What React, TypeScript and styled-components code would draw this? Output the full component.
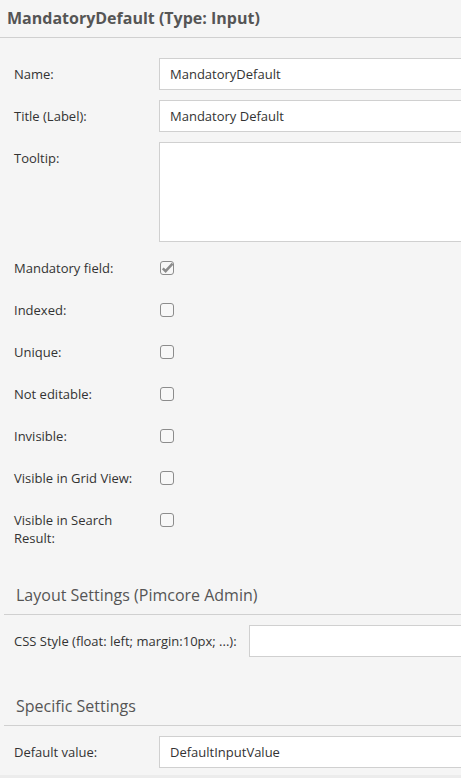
import React from "react";
import styled, { createGlobalStyle } from "styled-components";

const GlobalStyle = createGlobalStyle`
    html, body {
        margin: 0;
        padding: 0;
        background: #ececec;
    }
    body {
        font-family: "Open Sans", "Liberation Sans", sans-serif;
        overflow: hidden;
    }
`

const Panel = styled.div`
    width: 461px;
    height: 775px;
    background: #f5f5f5;
    overflow: hidden;
`

const Header = styled.div`
    height: 37px;
    line-height: 37px;
    padding-left: 7px;
    border-bottom: 1px solid #d0d0d0;
    font-size: 16px;
    font-weight: 700;
    color: #555;
    white-space: nowrap;
`

const Body = styled.div`
    padding-top: 20px;
    display: flex;
    flex-direction: column;
`

const Row = styled.div<{ $labelWidth?: number }>`
    display: flex;
    align-items: flex-start;
    min-height: 32px;
    margin-bottom: 10px;
    padding-left: 14px;

    & > label {
        flex: 0 0 ${({ $labelWidth }) => $labelWidth ?? 145}px;
    }
`

const Label = styled.label`
    box-sizing: border-box;
    padding: 7px 10px 0 0;
    font-size: 13px;
    line-height: 18px;
    color: #333;
`

const TextInput = styled.input`
    flex: 1 0 auto;
    width: 340px;
    height: 32px;
    box-sizing: border-box;
    margin: 0;
    padding: 0 10px;
    border: 1px solid #d0d0d0;
    border-right: none;
    background: #fff;
    font-family: inherit;
    font-size: 13px;
    color: #333;
    outline: none;
`

const TextArea = styled.textarea`
    flex: 1 0 auto;
    width: 340px;
    height: 100px;
    box-sizing: border-box;
    margin: 0;
    padding: 6px 10px;
    border: 1px solid #d0d0d0;
    border-right: none;
    background: #fff;
    resize: none;
    outline: none;
`

const CheckWrap = styled.span`
    display: flex;
    align-items: center;
    height: 32px;
    padding-left: 1px;
`

const Section = styled.div<{ $top: number }>`
    margin-top: ${({ $top }) => $top}px;
`

const SectionTitle = styled.div`
    margin-left: 4px;
    margin-bottom: 10px;
    padding: 0 12px 8px;
    border-bottom: 1px solid #d0d0d0;
    font-size: 16px;
    line-height: 22px;
    color: #555;
`

const Checkbox = ({ checked }: { checked?: boolean }) => (
    <svg width="15" height="15" viewBox="0 0 15 15">
        <rect x="0.5" y="0.5" width="13" height="13" rx="2.5" fill="#f7f7f7" stroke="#8c8c8c" />
        {checked && (
            <path d="M2.8 7.4 L5.6 10.1 L12.6 2.6" fill="none" stroke="#8c8c8c" strokeWidth="2.6" strokeLinejoin="miter" />
        )}
    </svg>
)

const checkRows: [string, boolean][] = [
    ["Mandatory field:", true],
    ["Indexed:", false],
    ["Unique:", false],
    ["Not editable:", false],
    ["Invisible:", false],
    ["Visible in Grid View:", false],
    ["Visible in Search Result:", false],
]

const App = () => {
    return (
        <>
            <GlobalStyle />
            <Panel>
                <Header>MandatoryDefault (Type: Input)</Header>
                <Body>
                    <Row>
                        <Label>Name:</Label>
                        <TextInput defaultValue="MandatoryDefault" />
                    </Row>
                    <Row>
                        <Label>Title (Label):</Label>
                        <TextInput defaultValue="Mandatory Default" />
                    </Row>
                    <Row>
                        <Label>Tooltip:</Label>
                        <TextArea />
                    </Row>
                    {checkRows.map(([text, checked]) => (
                        <Row key={text}>
                            <Label>{text}</Label>
                            <CheckWrap>
                                <Checkbox checked={checked} />
                            </CheckWrap>
                        </Row>
                    ))}
                    <Section $top={27}>
                        <SectionTitle>Layout Settings (Pimcore Admin)</SectionTitle>
                        <Row $labelWidth={235}>
                            <Label>CSS Style (float: left; margin:10px; ...):</Label>
                            <TextInput />
                        </Row>
                    </Section>
                    <Section $top={28}>
                        <SectionTitle>Specific Settings</SectionTitle>
                        <Row>
                            <Label>Default value:</Label>
                            <TextInput defaultValue="DefaultInputValue" />
                        </Row>
                    </Section>
                </Body>
            </Panel>
        </>
    )
}

export default App
